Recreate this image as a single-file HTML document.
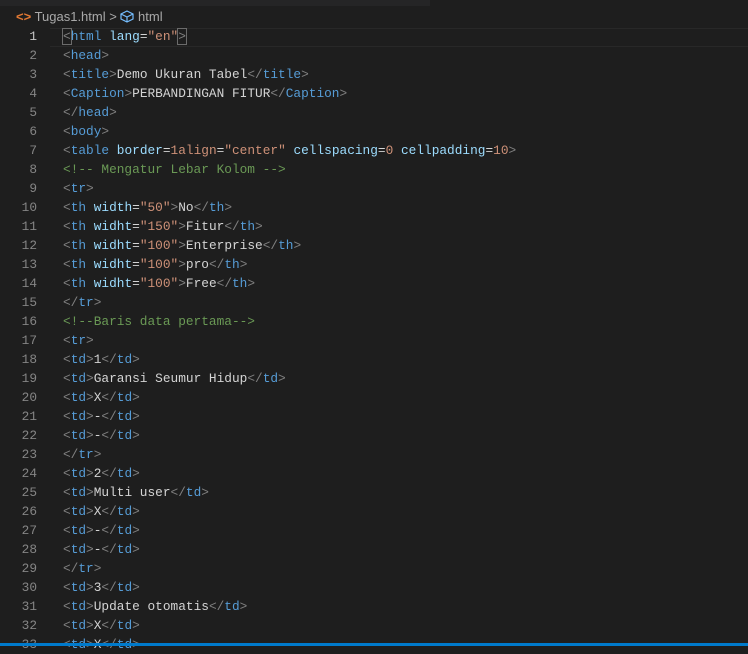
<!DOCTYPE html>
<html><head><meta charset="utf-8"><style>
body{margin:0;width:748px;height:646px;background:#1e1e1e;overflow:hidden;position:relative;font-family:"Liberation Mono",monospace}
.top{position:absolute;left:0;top:0;width:748px;height:6px;background:#252526}
.top2{position:absolute;left:430px;top:0;width:318px;height:6px;background:#1e1e1e}
.bc{position:absolute;left:16px;top:8px;height:18px;font:13px "Liberation Sans",sans-serif;color:#a9a9a9;line-height:18px;white-space:nowrap}
.hl{position:absolute;left:50px;top:28px;width:698px;height:17px;border-top:1px solid #282828;border-bottom:1px solid #282828}
.ln{position:absolute;left:0;width:37px;text-align:right;color:#858585;font-size:12.8px;line-height:19px}
.cd{position:absolute;left:63px;color:#d4d4d4;font-size:12.8px;line-height:19px;white-space:pre}
.b{color:#808080}.t{color:#569cd6}.a{color:#9cdcfe}.s{color:#ce9178}.c{color:#6a9955}
.sb{position:absolute;left:0;top:643px;width:748px;height:3px;background:#007acc}
.cur{outline:1px solid #6b6b6b}
</style></head><body>
<div class="top"></div><div class="top2"></div>
<div class="bc"><span style="color:#e37933;font-weight:bold">&lt;&gt;</span> Tugas1.html &gt; <svg width="14" height="13" viewBox="0 0 14 13" style="vertical-align:-2px"><path d="M7 1L13 4V9L7 12L1 9V4Z M1 4L7 7L13 4 M7 7V12" fill="none" stroke="#75beff" stroke-width="1.2"/></svg> html</div>
<div class="hl"></div>
<div id="c"></div>
<div class="sb"></div>
<script>
const L=[
'<span class="b cur">&lt;</span><span class="t">html</span> <span class="a">lang</span>=<span class="s">"en"</span><span class="b cur">&gt;</span>',
'<span class="b">&lt;</span><span class="t">head</span><span class="b">&gt;</span>',
'<span class="b">&lt;</span><span class="t">title</span><span class="b">&gt;</span>Demo Ukuran Tabel<span class="b">&lt;/</span><span class="t">title</span><span class="b">&gt;</span>',
'<span class="b">&lt;</span><span class="t">Caption</span><span class="b">&gt;</span>PERBANDINGAN FITUR<span class="b">&lt;/</span><span class="t">Caption</span><span class="b">&gt;</span>',
'<span class="b">&lt;/</span><span class="t">head</span><span class="b">&gt;</span>',
'<span class="b">&lt;</span><span class="t">body</span><span class="b">&gt;</span>',
'<span class="b">&lt;</span><span class="t">table</span> <span class="a">border</span>=<span class="s">1align</span>=<span class="s">"center"</span> <span class="a">cellspacing</span>=<span class="s">0</span> <span class="a">cellpadding</span>=<span class="s">10</span><span class="b">&gt;</span>',
'<span class="c">&lt;!-- Mengatur Lebar Kolom --&gt;</span>',
'<span class="b">&lt;</span><span class="t">tr</span><span class="b">&gt;</span>',
'<span class="b">&lt;</span><span class="t">th</span> <span class="a">width</span>=<span class="s">"50"</span><span class="b">&gt;</span>No<span class="b">&lt;/</span><span class="t">th</span><span class="b">&gt;</span>',
'<span class="b">&lt;</span><span class="t">th</span> <span class="a">widht</span>=<span class="s">"150"</span><span class="b">&gt;</span>Fitur<span class="b">&lt;/</span><span class="t">th</span><span class="b">&gt;</span>',
'<span class="b">&lt;</span><span class="t">th</span> <span class="a">widht</span>=<span class="s">"100"</span><span class="b">&gt;</span>Enterprise<span class="b">&lt;/</span><span class="t">th</span><span class="b">&gt;</span>',
'<span class="b">&lt;</span><span class="t">th</span> <span class="a">widht</span>=<span class="s">"100"</span><span class="b">&gt;</span>pro<span class="b">&lt;/</span><span class="t">th</span><span class="b">&gt;</span>',
'<span class="b">&lt;</span><span class="t">th</span> <span class="a">widht</span>=<span class="s">"100"</span><span class="b">&gt;</span>Free<span class="b">&lt;/</span><span class="t">th</span><span class="b">&gt;</span>',
'<span class="b">&lt;/</span><span class="t">tr</span><span class="b">&gt;</span>',
'<span class="c">&lt;!--Baris data pertama--&gt;</span>',
'<span class="b">&lt;</span><span class="t">tr</span><span class="b">&gt;</span>',
'TD1','TD:Garansi Seumur Hidup','TDX','TD-','TD-',
'<span class="b">&lt;/</span><span class="t">tr</span><span class="b">&gt;</span>',
'TD2','TD:Multi user','TDX','TD-','TD-',
'<span class="b">&lt;/</span><span class="t">tr</span><span class="b">&gt;</span>',
'TD3','TD:Update otomatis','TDX','TDX'];
let h='';
L.forEach((s,i)=>{
 if(s.startsWith('TD')){let v=s.slice(2);if(v[0]==':')v=v.slice(1);s='<span class="b">&lt;</span><span class="t">td</span><span class="b">&gt;</span>'+v+'<span class="b">&lt;/</span><span class="t">td</span><span class="b">&gt;</span>';}
 const top=27+19*i;
 h+='<div class="ln" style="top:'+top+'px;'+(i==0?'color:#c6c6c6':'')+'">'+(i+1)+'</div><div class="cd" style="top:'+top+'px">'+s+'</div>';
});
document.getElementById('c').innerHTML=h;
</script>
</body></html>
